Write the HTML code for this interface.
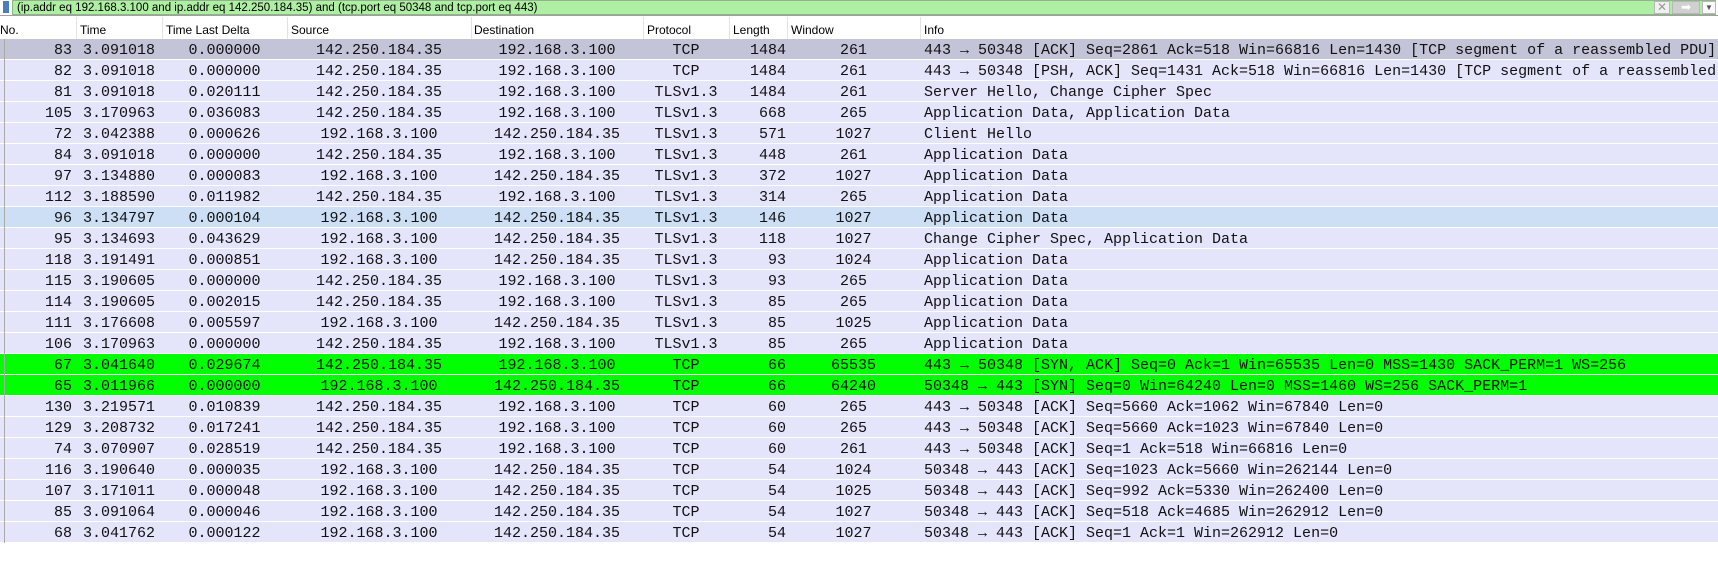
<!DOCTYPE html>
<html><head><meta charset="utf-8"><style>
*{margin:0;padding:0;box-sizing:border-box}
body{width:1718px;height:564px;background:#fff;position:relative;overflow:hidden;font-family:"Liberation Sans",sans-serif}
#fb{position:absolute;left:0;top:0;width:1718px;height:16px;background:#fff;border-bottom:1px solid #a0a0a0}
#fbg{position:absolute;left:12px;top:0;width:1704px;height:15px;background:#afefa3;border:1px solid #8fb48a;font-size:11.5px;line-height:14px;padding-left:4px;color:#000}
#ico{position:absolute;left:3px;top:1px;width:6px;height:12px;background:#4a7cc0}
.btn{position:absolute;top:1px;height:13px;background:#e8e8e8;border:1px solid #b8b8b8}
#hd{position:absolute;left:0;top:17px;width:1718px;height:22px;font-size:12px;color:#000}
.h{position:absolute;top:6px}
.hs{position:absolute;top:0;width:1px;height:22px;background:#e3e3e3}
.r{position:absolute;left:0;width:1718px;height:20px;background:#e4e4fb;font-family:"Liberation Mono","DejaVu Sans Mono",monospace;font-size:15px;line-height:24px;color:#111;white-space:pre;overflow:hidden}
.r span{position:absolute;top:0}
.c1{right:1646px}
.c2{left:83px}
.c3{left:162px;width:125px;text-align:center}
.c4{left:287px;width:184px;text-align:center}
.c5{left:471px;width:172px;text-align:center}
.c6{left:643px;width:86px;text-align:center}
.c7{right:932px}
.c8{left:787px;width:133px;text-align:center}
.c9{left:924px}
</style></head><body>
<div id="fb"><div id="ico"></div><div id="fbg">(ip.addr eq 192.168.3.100 and ip.addr eq 142.250.184.35) and (tcp.port eq 50348 and tcp.port eq 443)</div>
<div class="btn" style="left:1654px;width:16px;background:#f0f0f0;color:#999;font-size:12px;line-height:11px;text-align:center">✕</div>
<div class="btn" style="left:1672px;width:28px;background:#d0d0d0;color:#fff;font-size:12px;line-height:11px;text-align:center">➡</div>
<div class="btn" style="left:1702px;width:14px;background:#fafafa;color:#555;font-size:8px;line-height:11px;text-align:center">▼</div>
</div>
<div id="hd">
<span class="h" style="left:0">No.</span><span class="hs" style="left:76px"></span>
<span class="h" style="left:80px">Time</span><span class="hs" style="left:162px"></span>
<span class="h" style="left:166px">Time Last Delta</span><span class="hs" style="left:287px"></span>
<span class="h" style="left:291px">Source</span><span class="hs" style="left:471px"></span>
<span class="h" style="left:474px">Destination</span><span class="hs" style="left:643px"></span>
<span class="h" style="left:647px">Protocol</span><span class="hs" style="left:729px"></span>
<span class="h" style="left:733px">Length</span><span class="hs" style="left:787px"></span>
<span class="h" style="left:791px">Window</span><span class="hs" style="left:920px"></span>
<span class="h" style="left:924px">Info</span>
</div>
<div id="rows"></div>
<script>
const d=[
["83","3.091018","0.000000","142.250.184.35","192.168.3.100","TCP","1484","261","443 → 50348 [ACK] Seq=2861 Ack=518 Win=66816 Len=1430 [TCP segment of a reassembled PDU]","#c4c4d8"],
["82","3.091018","0.000000","142.250.184.35","192.168.3.100","TCP","1484","261","443 → 50348 [PSH, ACK] Seq=1431 Ack=518 Win=66816 Len=1430 [TCP segment of a reassembled PDU]"],
["81","3.091018","0.020111","142.250.184.35","192.168.3.100","TLSv1.3","1484","261","Server Hello, Change Cipher Spec"],
["105","3.170963","0.036083","142.250.184.35","192.168.3.100","TLSv1.3","668","265","Application Data, Application Data"],
["72","3.042388","0.000626","192.168.3.100","142.250.184.35","TLSv1.3","571","1027","Client Hello"],
["84","3.091018","0.000000","142.250.184.35","192.168.3.100","TLSv1.3","448","261","Application Data"],
["97","3.134880","0.000083","192.168.3.100","142.250.184.35","TLSv1.3","372","1027","Application Data"],
["112","3.188590","0.011982","142.250.184.35","192.168.3.100","TLSv1.3","314","265","Application Data"],
["96","3.134797","0.000104","192.168.3.100","142.250.184.35","TLSv1.3","146","1027","Application Data","#cddff5"],
["95","3.134693","0.043629","192.168.3.100","142.250.184.35","TLSv1.3","118","1027","Change Cipher Spec, Application Data"],
["118","3.191491","0.000851","192.168.3.100","142.250.184.35","TLSv1.3","93","1024","Application Data"],
["115","3.190605","0.000000","142.250.184.35","192.168.3.100","TLSv1.3","93","265","Application Data"],
["114","3.190605","0.002015","142.250.184.35","192.168.3.100","TLSv1.3","85","265","Application Data"],
["111","3.176608","0.005597","192.168.3.100","142.250.184.35","TLSv1.3","85","1025","Application Data"],
["106","3.170963","0.000000","142.250.184.35","192.168.3.100","TLSv1.3","85","265","Application Data"],
["67","3.041640","0.029674","142.250.184.35","192.168.3.100","TCP","66","65535","443 → 50348 [SYN, ACK] Seq=0 Ack=1 Win=65535 Len=0 MSS=1430 SACK_PERM=1 WS=256","#00ff00"],
["65","3.011966","0.000000","192.168.3.100","142.250.184.35","TCP","66","64240","50348 → 443 [SYN] Seq=0 Win=64240 Len=0 MSS=1460 WS=256 SACK_PERM=1","#00ff00"],
["130","3.219571","0.010839","142.250.184.35","192.168.3.100","TCP","60","265","443 → 50348 [ACK] Seq=5660 Ack=1062 Win=67840 Len=0"],
["129","3.208732","0.017241","142.250.184.35","192.168.3.100","TCP","60","265","443 → 50348 [ACK] Seq=5660 Ack=1023 Win=67840 Len=0"],
["74","3.070907","0.028519","142.250.184.35","192.168.3.100","TCP","60","261","443 → 50348 [ACK] Seq=1 Ack=518 Win=66816 Len=0"],
["116","3.190640","0.000035","192.168.3.100","142.250.184.35","TCP","54","1024","50348 → 443 [ACK] Seq=1023 Ack=5660 Win=262144 Len=0"],
["107","3.171011","0.000048","192.168.3.100","142.250.184.35","TCP","54","1025","50348 → 443 [ACK] Seq=992 Ack=5330 Win=262400 Len=0"],
["85","3.091064","0.000046","192.168.3.100","142.250.184.35","TCP","54","1027","50348 → 443 [ACK] Seq=518 Ack=4685 Win=262912 Len=0"],
["68","3.041762","0.000122","192.168.3.100","142.250.184.35","TCP","54","1027","50348 → 443 [ACK] Seq=1 Ack=1 Win=262912 Len=0"]];
let h="";
d.forEach((r,i)=>{
h+=`<div class="r" style="top:${39+i*21}px;${r[9]?'background:'+r[9]:''}">`;
for(let k=0;k<9;k++)h+=`<span class="c${k+1}">${r[k]}</span>`;
h+=`</div>`;
});
h+=`<div style="position:absolute;left:4px;top:39px;width:1px;height:504px;background:#aaa"></div>`;
document.getElementById('rows').innerHTML=h;
</script>
</body></html>
